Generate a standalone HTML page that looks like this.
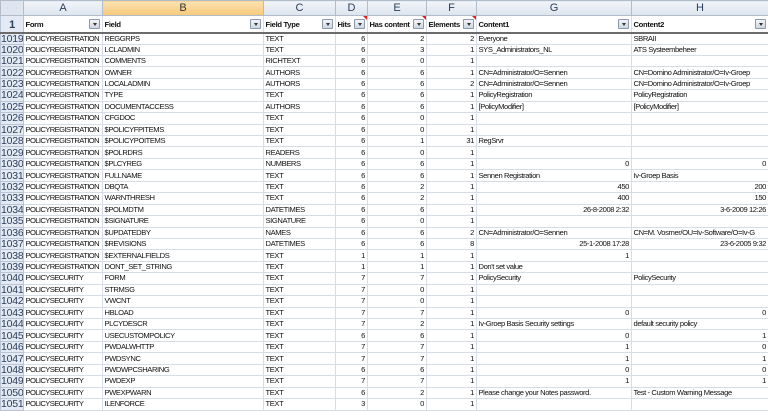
<!DOCTYPE html>
<html><head><meta charset="utf-8"><style>
*{margin:0;padding:0;box-sizing:border-box}
body{width:768px;height:405px;overflow:hidden;background:#fff;font-family:"Liberation Sans",sans-serif}
table{border-collapse:collapse;table-layout:fixed;position:absolute;left:0;top:0;width:768px}
td{border:1px solid #d6dde8;font-size:7.6px;color:#111;white-space:nowrap;overflow:hidden;padding:0;text-indent:1.5px;height:11.45px;line-height:10px;letter-spacing:-0.4px}
tr td:nth-child(2){letter-spacing:-0.6px}
tr.ch td{height:15px;background:linear-gradient(#f1f4f9,#dde4ee);border-color:#b1bccb;text-align:center;font-size:11px;color:#2b3f5a;line-height:14px;letter-spacing:0;text-indent:0}
tr.ch td.sel{background:linear-gradient(#fbe3b0,#f7c97a);color:#333}
tr.ch td.corner{background:#dfe6ef}
tr.h1 td{height:17px;border-bottom:2px solid #6b6b6b;font-weight:bold;font-size:7.6px;position:relative;vertical-align:bottom;padding-bottom:2px;letter-spacing:-0.3px}
td.rn{background:#e3eaf4;border-color:#b9c5d6;font-size:10.5px;color:#2b3f5a;text-indent:0;letter-spacing:-0.2px;text-align:left;font-weight:normal}
tr.h1 td.rn{text-align:center;font-size:11px;vertical-align:bottom}
.fb{position:absolute;right:2px;top:3px;width:11px;height:10px;border:1px solid #8a99ae;background:linear-gradient(#f3f5f8,#cfd7e2);border-radius:1px}
.fb:after{content:"";position:absolute;left:2.5px;top:3px;border-left:2.5px solid transparent;border-right:2.5px solid transparent;border-top:3px solid #333}
.rt{position:absolute;right:0;top:0;border-left:4px solid transparent;border-top:4px solid #e02020}
td.r{text-align:right;text-indent:0}
td.r::after{content:"";display:inline-block;width:2px}
</style></head><body>
<table>
<colgroup><col style="width:23px"><col style="width:79px"><col style="width:161px"><col style="width:72px"><col style="width:32px"><col style="width:59px"><col style="width:50px"><col style="width:155px"><col style="width:137px"></colgroup>
<tr class="ch"><td class="corner"></td><td>A</td><td class="sel">B</td><td>C</td><td>D</td><td>E</td><td>F</td><td>G</td><td>H</td></tr>
<tr class="h1"><td class="rn">1</td><td>Form<span class="fb"></span></td><td>Field<span class="fb"></span></td><td>Field Type<span class="fb"></span></td><td>Hits<span class="fb"></span><span class="rt"></span></td><td>Has content<span class="fb"></span><span class="rt"></span></td><td>Elements<span class="fb"></span><span class="rt"></span></td><td>Content1<span class="fb"></span></td><td>Content2<span class="fb"></span></td></tr>
<tr><td class="rn">1019</td><td>POLICYREGISTRATION</td><td>REGGRPS</td><td>TEXT</td><td class="r">6</td><td class="r">2</td><td class="r">2</td><td>Everyone</td><td>SBRAII</td></tr>
<tr><td class="rn">1020</td><td>POLICYREGISTRATION</td><td>LCLADMIN</td><td>TEXT</td><td class="r">6</td><td class="r">3</td><td class="r">1</td><td>SYS_Administrators_NL</td><td>ATS Systeembeheer</td></tr>
<tr><td class="rn">1021</td><td>POLICYREGISTRATION</td><td>COMMENTS</td><td>RICHTEXT</td><td class="r">6</td><td class="r">0</td><td class="r">1</td><td></td><td></td></tr>
<tr><td class="rn">1022</td><td>POLICYREGISTRATION</td><td>OWNER</td><td>AUTHORS</td><td class="r">6</td><td class="r">6</td><td class="r">1</td><td>CN=Administrator/O=Sennen</td><td>CN=Domino Administrator/O=Iv-Groep</td></tr>
<tr><td class="rn">1023</td><td>POLICYREGISTRATION</td><td>LOCALADMIN</td><td>AUTHORS</td><td class="r">6</td><td class="r">6</td><td class="r">2</td><td>CN=Administrator/O=Sennen</td><td>CN=Domino Administrator/O=Iv-Groep</td></tr>
<tr><td class="rn">1024</td><td>POLICYREGISTRATION</td><td>TYPE</td><td>TEXT</td><td class="r">6</td><td class="r">6</td><td class="r">1</td><td>PolicyRegistration</td><td>PolicyRegistration</td></tr>
<tr><td class="rn">1025</td><td>POLICYREGISTRATION</td><td>DOCUMENTACCESS</td><td>AUTHORS</td><td class="r">6</td><td class="r">6</td><td class="r">1</td><td>[PolicyModifier]</td><td>[PolicyModifier]</td></tr>
<tr><td class="rn">1026</td><td>POLICYREGISTRATION</td><td>CFGDOC</td><td>TEXT</td><td class="r">6</td><td class="r">0</td><td class="r">1</td><td></td><td></td></tr>
<tr><td class="rn">1027</td><td>POLICYREGISTRATION</td><td>$POLICYFPITEMS</td><td>TEXT</td><td class="r">6</td><td class="r">0</td><td class="r">1</td><td></td><td></td></tr>
<tr><td class="rn">1028</td><td>POLICYREGISTRATION</td><td>$POLICYPOITEMS</td><td>TEXT</td><td class="r">6</td><td class="r">1</td><td class="r">31</td><td>RegSrvr</td><td></td></tr>
<tr><td class="rn">1029</td><td>POLICYREGISTRATION</td><td>$POLRDRS</td><td>READERS</td><td class="r">6</td><td class="r">0</td><td class="r">1</td><td></td><td></td></tr>
<tr><td class="rn">1030</td><td>POLICYREGISTRATION</td><td>$PLCYREG</td><td>NUMBERS</td><td class="r">6</td><td class="r">6</td><td class="r">1</td><td class="r">0</td><td class="r">0</td></tr>
<tr><td class="rn">1031</td><td>POLICYREGISTRATION</td><td>FULLNAME</td><td>TEXT</td><td class="r">6</td><td class="r">6</td><td class="r">1</td><td>Sennen Registration</td><td>Iv-Groep Basis</td></tr>
<tr><td class="rn">1032</td><td>POLICYREGISTRATION</td><td>DBQTA</td><td>TEXT</td><td class="r">6</td><td class="r">2</td><td class="r">1</td><td class="r">450</td><td class="r">200</td></tr>
<tr><td class="rn">1033</td><td>POLICYREGISTRATION</td><td>WARNTHRESH</td><td>TEXT</td><td class="r">6</td><td class="r">2</td><td class="r">1</td><td class="r">400</td><td class="r">150</td></tr>
<tr><td class="rn">1034</td><td>POLICYREGISTRATION</td><td>$POLMDTM</td><td>DATETIMES</td><td class="r">6</td><td class="r">6</td><td class="r">1</td><td class="r">26-8-2008 2:32</td><td class="r">3-6-2009 12:26</td></tr>
<tr><td class="rn">1035</td><td>POLICYREGISTRATION</td><td>$SIGNATURE</td><td>SIGNATURE</td><td class="r">6</td><td class="r">0</td><td class="r">1</td><td></td><td></td></tr>
<tr><td class="rn">1036</td><td>POLICYREGISTRATION</td><td>$UPDATEDBY</td><td>NAMES</td><td class="r">6</td><td class="r">6</td><td class="r">2</td><td>CN=Administrator/O=Sennen</td><td>CN=M. Vosmer/OU=Iv-Software/O=Iv-G</td></tr>
<tr><td class="rn">1037</td><td>POLICYREGISTRATION</td><td>$REVISIONS</td><td>DATETIMES</td><td class="r">6</td><td class="r">6</td><td class="r">8</td><td class="r">25-1-2008 17:28</td><td class="r">23-6-2005 9:32</td></tr>
<tr><td class="rn">1038</td><td>POLICYREGISTRATION</td><td>$EXTERNALFIELDS</td><td>TEXT</td><td class="r">1</td><td class="r">1</td><td class="r">1</td><td class="r">1</td><td></td></tr>
<tr><td class="rn">1039</td><td>POLICYREGISTRATION</td><td>DONT_SET_STRING</td><td>TEXT</td><td class="r">1</td><td class="r">1</td><td class="r">1</td><td>Don't set value</td><td></td></tr>
<tr><td class="rn">1040</td><td>POLICYSECURITY</td><td>FORM</td><td>TEXT</td><td class="r">7</td><td class="r">7</td><td class="r">1</td><td>PolicySecurity</td><td>PolicySecurity</td></tr>
<tr><td class="rn">1041</td><td>POLICYSECURITY</td><td>STRMSG</td><td>TEXT</td><td class="r">7</td><td class="r">0</td><td class="r">1</td><td></td><td></td></tr>
<tr><td class="rn">1042</td><td>POLICYSECURITY</td><td>VWCNT</td><td>TEXT</td><td class="r">7</td><td class="r">0</td><td class="r">1</td><td></td><td></td></tr>
<tr><td class="rn">1043</td><td>POLICYSECURITY</td><td>HBLOAD</td><td>TEXT</td><td class="r">7</td><td class="r">7</td><td class="r">1</td><td class="r">0</td><td class="r">0</td></tr>
<tr><td class="rn">1044</td><td>POLICYSECURITY</td><td>PLCYDESCR</td><td>TEXT</td><td class="r">7</td><td class="r">2</td><td class="r">1</td><td>Iv-Groep Basis Security settings</td><td>default security policy</td></tr>
<tr><td class="rn">1045</td><td>POLICYSECURITY</td><td>USECUSTOMPOLICY</td><td>TEXT</td><td class="r">6</td><td class="r">6</td><td class="r">1</td><td class="r">0</td><td class="r">1</td></tr>
<tr><td class="rn">1046</td><td>POLICYSECURITY</td><td>PWDALWHTTP</td><td>TEXT</td><td class="r">7</td><td class="r">7</td><td class="r">1</td><td class="r">1</td><td class="r">0</td></tr>
<tr><td class="rn">1047</td><td>POLICYSECURITY</td><td>PWDSYNC</td><td>TEXT</td><td class="r">7</td><td class="r">7</td><td class="r">1</td><td class="r">1</td><td class="r">1</td></tr>
<tr><td class="rn">1048</td><td>POLICYSECURITY</td><td>PWDWPCSHARING</td><td>TEXT</td><td class="r">6</td><td class="r">6</td><td class="r">1</td><td class="r">0</td><td class="r">0</td></tr>
<tr><td class="rn">1049</td><td>POLICYSECURITY</td><td>PWDEXP</td><td>TEXT</td><td class="r">7</td><td class="r">7</td><td class="r">1</td><td class="r">1</td><td class="r">1</td></tr>
<tr><td class="rn">1050</td><td>POLICYSECURITY</td><td>PWEXPWARN</td><td>TEXT</td><td class="r">6</td><td class="r">2</td><td class="r">1</td><td>Please change your Notes password.</td><td>Test - Custom Warning Message</td></tr>
<tr><td class="rn">1051</td><td>POLICYSECURITY</td><td>ILENFORCE</td><td>TEXT</td><td class="r">3</td><td class="r">0</td><td class="r">1</td><td></td><td></td></tr>
</table>
</body></html>
